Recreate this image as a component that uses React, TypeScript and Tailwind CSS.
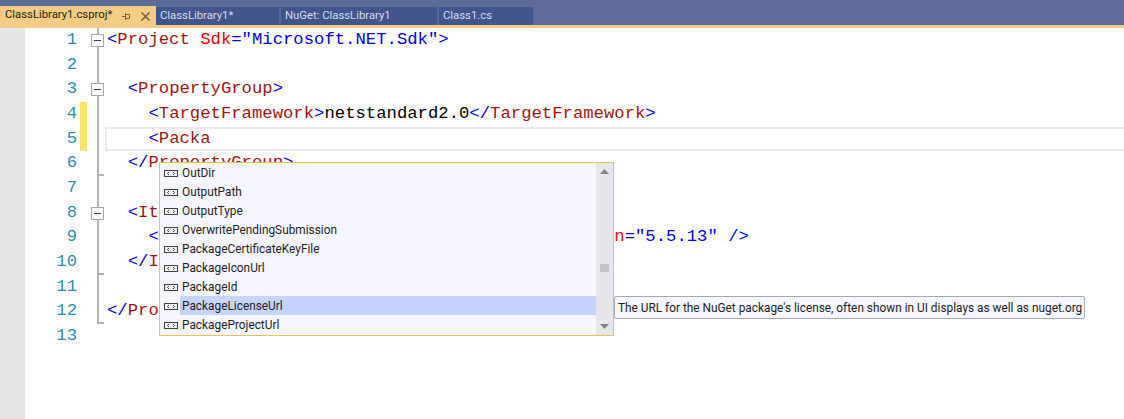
import type { ReactNode } from "react";

const B = ({ children }: { children: ReactNode }) => <span className="text-[#0000ff]">{children}</span>;
const N = ({ children }: { children: ReactNode }) => <span className="text-[#a31515]">{children}</span>;
const A = ({ children }: { children: ReactNode }) => <span className="text-[#ff0000]">{children}</span>;

type Fold = "box" | "line" | "tick" | "end" | "none";

interface Line {
  fold: Fold;
  changed?: boolean;
  current?: boolean;
  code?: ReactNode;
}

const LINES: Line[] = [
  {
    fold: "box",
    code: (
      <>
        <B>&lt;</B><N>Project</N> <A>Sdk</A><B>="Microsoft.NET.Sdk"&gt;</B>
      </>
    ),
  },
  { fold: "line" },
  {
    fold: "box",
    code: (
      <>
        {"  "}<B>&lt;</B><N>PropertyGroup</N><B>&gt;</B>
      </>
    ),
  },
  {
    fold: "line",
    changed: true,
    code: (
      <>
        {"    "}<B>&lt;</B><N>TargetFramework</N><B>&gt;</B>netstandard2.0<B>&lt;/</B><N>TargetFramework</N><B>&gt;</B>
      </>
    ),
  },
  {
    fold: "line",
    changed: true,
    current: true,
    code: (
      <>
        {"    "}<B>&lt;</B><N>Packa</N>
      </>
    ),
  },
  {
    fold: "tick",
    code: (
      <>
        {"  "}<B>&lt;/</B><N>PropertyGroup</N><B>&gt;</B>
      </>
    ),
  },
  { fold: "line" },
  {
    fold: "box",
    code: (
      <>
        {"  "}<B>&lt;</B><N>ItemGroup</N><B>&gt;</B>
      </>
    ),
  },
  {
    fold: "line",
    code: (
      <>
        {"    "}<B>&lt;</B><N>PackageReference</N> <A>Include</A><B>="iTextSharp"</B> <A>Version</A><B>="5.5.13"</B> <B>/&gt;</B>
      </>
    ),
  },
  {
    fold: "tick",
    code: (
      <>
        {"  "}<B>&lt;/</B><N>ItemGroup</N><B>&gt;</B>
      </>
    ),
  },
  { fold: "line" },
  {
    fold: "end",
    code: (
      <>
        <B>&lt;/</B><N>Project</N><B>&gt;</B>
      </>
    ),
  },
  { fold: "none" },
];

const ITEMS = [
  "OutDir",
  "OutputPath",
  "OutputType",
  "OverwritePendingSubmission",
  "PackageCertificateKeyFile",
  "PackageIconUrl",
  "PackageId",
  "PackageLicenseUrl",
  "PackageProjectUrl",
];

function FoldCell({ fold }: { fold: Fold }) {
  if (fold === "none") return <div className="w-[13px] shrink-0" />;
  return (
    <div className="relative w-[13px] shrink-0">
      <div className={`absolute left-[6px] top-0 w-[2px] bg-[#b4b4b4] ${fold === "end" ? "bottom-0" : "-bottom-[1px]"}`} />
      {(fold === "tick" || fold === "end") && (
        <div className="absolute bottom-0 left-[6px] h-[2px] w-[7px] bg-[#b4b4b4]" />
      )}
      {fold === "box" && (
        <div className="absolute left-0 top-[6px] flex h-[13px] w-[13px] items-center justify-center border border-[#a8a8a8] bg-white">
          <div className="h-[1px] w-[7px] bg-[#404040]" />
        </div>
      )}
    </div>
  );
}

function TagIcon() {
  return (
    <svg width="14" height="7" viewBox="0 0 14 7" className="mt-[2px] shrink-0">
      <rect x="0.5" y="0.5" width="13" height="6" fill="#f0eff1" stroke="#424242" />
      <path d="M5 2 L3.5 3.5 L5 5 M9 2 L10.5 3.5 L9 5" fill="none" stroke="#424242" />
    </svg>
  );
}

function Tab({ label, w }: { label: string; w: string }) {
  return (
    <div className={`flex h-[18px] items-center bg-[#40568d] pl-[4px] text-[11.3px] text-[#d6dbe9] ${w}`}>{label}</div>
  );
}

export default function App() {
  return (
    <div className="flex h-[419px] w-[1124px] flex-col overflow-hidden bg-white font-['Roboto',sans-serif]">
      <div className="h-[28px] shrink-0 bg-[#5d6b99]">
        <div className="flex h-[25px] items-end pt-[6px]">
          <div className="flex h-full w-[156px] items-center bg-[#f5cc84] pl-[5px] text-[11.3px] text-[#1e1e1e]">
            <span className="w-[112px] whitespace-nowrap">ClassLibrary1.csproj*</span>
            <svg width="8" height="7" viewBox="0 0 8 7" className="ml-[5px] mt-[2px] shrink-0">
              <path d="M0 3.5 H3 M3.5 0 V7 M3.5 1.5 H7.5 V5.5 H3.5" fill="none" stroke="#75633a" />
            </svg>
            <svg width="9" height="9" viewBox="0 0 9 9" className="ml-[11px] mt-[1px] shrink-0">
              <path d="M0.5 0.5 L8.5 8.5 M8.5 0.5 L0.5 8.5" fill="none" stroke="#75633a" strokeWidth="1.5" />
            </svg>
          </div>
          <div className="flex h-full items-start gap-[2px] pt-[1px]">
            <Tab label="ClassLibrary1*" w="w-[123px]" />
            <Tab label="NuGet: ClassLibrary1" w="w-[156px]" />
            <Tab label="Class1.cs" w="w-[94px]" />
          </div>
        </div>
        <div className="h-[3px] bg-[#f5cc84]" />
      </div>

      <div className="relative flex min-h-0 flex-1">
        <div className="w-[25px] shrink-0 bg-[#e6e7e8]" />
        <div className="min-w-0 flex-1">
          {LINES.map((line, i) => (
            <div key={i} className="flex h-[24.67px] font-['Liberation_Mono',monospace] text-[17.25px]">
              <div className="w-[52px] shrink-0 text-right leading-[24px] text-[#2b91af]">{i + 1}</div>
              <div className="ml-[3px] w-[7px] shrink-0">
                {line.changed && <div className="h-full bg-[#fee568]" />}
              </div>
              <div className="w-[4px] shrink-0" />
              <FoldCell fold={line.fold} />
              <div
                className={
                  line.current
                    ? "ml-[1px] flex-1 border-2 border-r-0 border-[#e9e9f1] leading-[20px] whitespace-pre text-black"
                    : "ml-[1px] flex-1 pl-[2px] leading-[24px] whitespace-pre text-black"
                }
              >
                {line.code}
              </div>
            </div>
          ))}
        </div>

        <div className="absolute left-[159px] top-[134px] flex h-[174px] w-[455px] border border-[#e5c365] bg-[#f5f6fe] text-[11.85px] text-[#1e1e1e]">
          <div className="flex min-w-0 flex-1 flex-col">
            {ITEMS.map((item) => (
              <div key={item} className="flex h-[19px] shrink-0 items-center">
                <div className="flex w-[20px] shrink-0 justify-center pl-[1px]">
                  <TagIcon />
                </div>
                <div
                  className={`flex h-full flex-1 items-center pl-[2px] pt-[2px] ${
                    item === "PackageLicenseUrl" ? "bg-[#c5d4fb]" : ""
                  }`}
                >
                  {item}
                </div>
              </div>
            ))}
          </div>
          <div className="flex w-[17px] shrink-0 flex-col items-center bg-[#e6e6ec] py-[6px]">
            <svg width="9" height="5" viewBox="0 0 9 5" className="shrink-0">
              <path d="M4.5 0 L9 5 H0 Z" fill="#808086" />
            </svg>
            <div className="mt-[90px] h-[8px] w-[9px] shrink-0 bg-[#c2c3c9]" />
            <svg width="9" height="5" viewBox="0 0 9 5" className="mt-auto shrink-0">
              <path d="M0 0 H9 L4.5 5 Z" fill="#808086" />
            </svg>
          </div>
        </div>

        <div className="absolute left-[614px] top-[268px] flex h-[23px] w-[471px] items-center rounded-[2px] border border-[#a4a9b8] bg-[#f5f6fe] pl-[3px] pt-[2px] text-[11.85px] whitespace-nowrap text-[#1e1e1e]">
          The URL for the NuGet package's license, often shown in UI displays as well as nuget.org
        </div>
      </div>
    </div>
  );
}
